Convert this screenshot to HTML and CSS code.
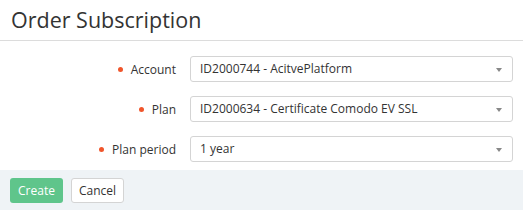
FILE: index.html
```html
<!DOCTYPE html>
<html lang="en">
  <head>
    <meta charset="UTF-8" />
    <title>Order Subscription</title>
    <link rel="stylesheet" href="styles.css">
  </head>
  <body>
    <header class="titulo">
      <h1>Order Subscription</h1>
    </header>

    <!-- Formulario -->
    <section class="formulario">
      <div class="linha">
        <label class="rotulo"><span class="ponto"></span>Account</label>
        <div class="campo">ID2000744 - AcitvePlatform<span class="seta"></span></div>
      </div>
      <div class="linha">
        <label class="rotulo"><span class="ponto"></span>Plan</label>
        <div class="campo">ID2000634 - Certificate Comodo EV SSL<span class="seta"></span></div>
      </div>
      <div class="linha">
        <label class="rotulo"><span class="ponto"></span>Plan period</label>
        <div class="campo">1 year<span class="seta"></span></div>
      </div>
    </section>

    <footer class="rodape">
      <button class="botao criar">Create</button>
      <button class="botao cancelar">Cancel</button>
    </footer>
  </body>
</html>
```
FILE: styles.css
```css
body {
  font-family: "Open Sans", Arial, sans-serif;
  margin: 0;
  padding: 0;
  background-color: #fff;
  color: #333;
  width: 523px;
  height: 210px;
  display: flex;
  flex-direction: column;
}
.titulo {
  height: 40px;
  flex-shrink: 0;
  border-bottom: 1px solid #dcdcdc;
  padding: 0 11px;
}
.titulo h1 {
  margin: 0;
  font-size: 21.5px;
  font-weight: normal;
  line-height: 40px;
  color: #333;
}
.formulario {
  padding: 15px 10px 0 0;
  flex: 1;
  min-height: 0;
}
.linha {
  display: flex;
  align-items: center;
  height: 26px;
  margin-bottom: 14px;
}
.linha:last-child {
  margin-bottom: 0;
}
.rotulo {
  width: 176px;
  display: flex;
  justify-content: flex-end;
  align-items: center;
  font-size: 12px;
  color: #333;
  margin-right: 14px;
}
.ponto {
  width: 5px;
  height: 5px;
  border-radius: 50%;
  background-color: #f0552b;
  margin-right: 8px;
}
.campo {
  position: relative;
  flex: 1;
  height: 24px;
  line-height: 24px;
  border: 1px solid #d4d4d4;
  border-radius: 3px;
  padding: 0 9px;
  font-size: 12px;
  color: #333;
}
.seta {
  position: absolute;
  right: 10px;
  top: 11px;
  width: 0;
  height: 0;
  border-left: 3px solid transparent;
  border-right: 3px solid transparent;
  border-top: 4px solid #888;
}
.rodape {
  height: 40px;
  flex-shrink: 0;
  background-color: #eff3f6;
  display: flex;
  align-items: center;
  padding: 0 10px;
  gap: 8px;
}
.botao {
  font-family: "Open Sans", Arial, sans-serif;
  font-size: 12px;
  height: 25px;
  padding: 0;
  border-radius: 3px;
  cursor: pointer;
}
.criar {
  background-color: #5fc58b;
  color: #fff;
  border: none;
  width: 53px;
}
.cancelar {
  background-color: #fff;
  color: #333;
  border: 1px solid #d4d4d4;
  width: 53px;
}
```
